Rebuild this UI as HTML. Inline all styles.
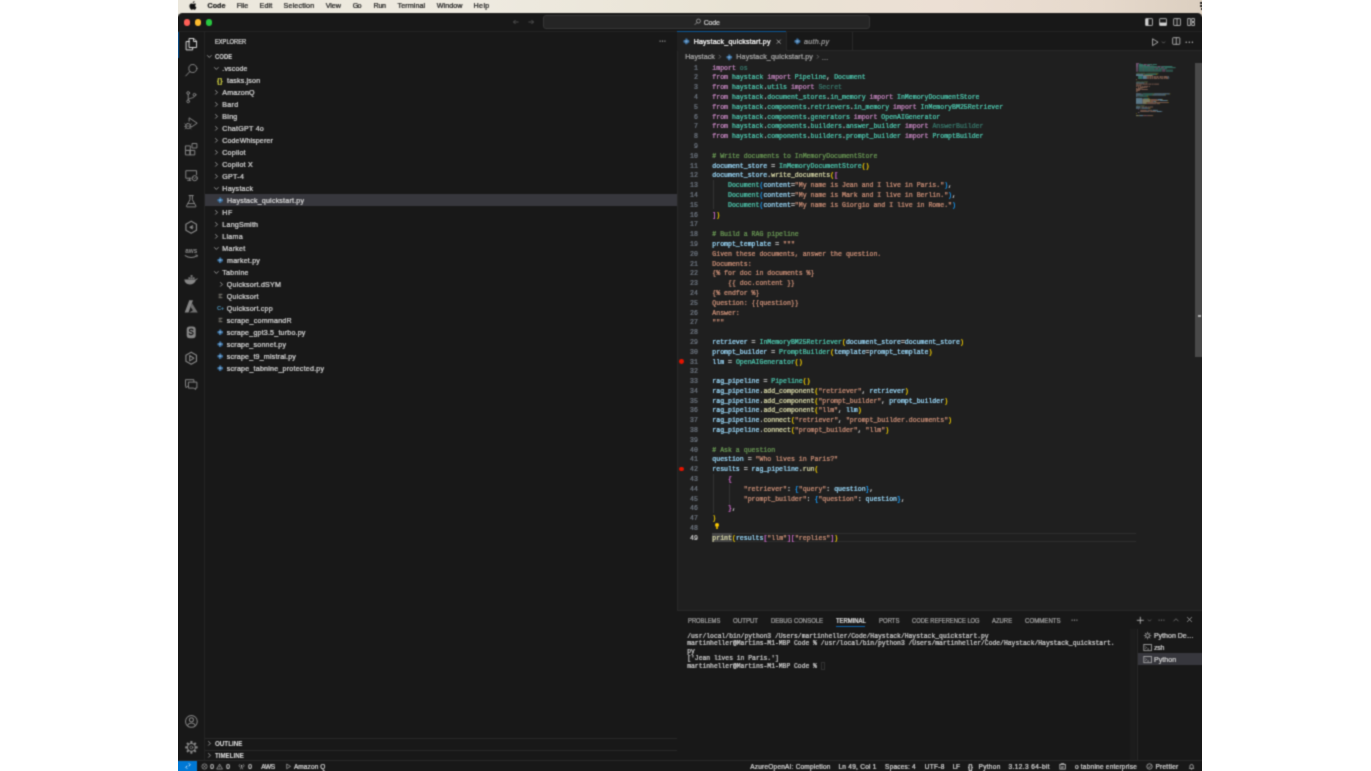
<!DOCTYPE html>
<html lang="en"><head><meta charset="utf-8"><title>Haystack_quickstart.py — Code</title>
<style>
html,body{margin:0;padding:0;background:#fff}
body{position:relative;width:1371px;height:771px;overflow:hidden;font-family:"Liberation Sans", sans-serif;-webkit-font-smoothing:antialiased}
#w{position:absolute;left:178px;top:0;width:1024px;height:771px;background:#181818;overflow:hidden;filter:url(#soft)}
#c{position:absolute;left:-178px;top:0;width:1371px;height:771px}
#c>div,#c>svg,#c>span{position:absolute}
svg{overflow:visible;display:block}
.t{white-space:pre;display:block;-webkit-text-stroke:0.240px}
.m{font-family:"Liberation Mono", monospace;font-size:6.556px;height:9.79px;line-height:9.79px;color:#d4d4d4}
.tm{font-family:"Liberation Mono", monospace;font-size:6.37px;height:7.62px;line-height:7.62px;color:#cccccc}
</style></head>
<body>
<svg width="0" height="0" style="position:absolute"><filter id="soft" x="0" y="0" width="100%" height="100%" color-interpolation-filters="sRGB"><feConvolveMatrix order="3" kernelMatrix="0.0361 0.1178 0.0361 0.1178 0.3844 0.1178 0.0361 0.1178 0.0361" edgeMode="duplicate" preserveAlpha="true"/></filter></svg>
<div id="w"><div id="c">
<div style="left:178px;top:31.5px;width:1024px;height:739.5px;background:#181818;"></div>
<div style="left:677px;top:31.5px;width:525px;height:579px;background:#1f1f1f;"></div>
<div style="left:204px;top:31.5px;width:0.6px;height:729px;background:#242424;"></div>
<div style="left:676.7px;top:31.5px;width:0.6px;height:729px;background:#282828;"></div>
<div style="left:178px;top:0px;width:1024px;height:16.6px;background:linear-gradient(90deg,#ebe7dc 0%,#eeeae0 30%,#e9e3d4 55%,#ecdfd4 75%,#e6d9cc 90%,#dccfc0 100%);"></div>
<svg style="left:188.6px;top:1.2px;" width="7.8" height="9" viewBox="0 0 17 20"><path fill="#111" d="M12.1 0c.1 1.1-.3 2.2-1 3-.7.8-1.8 1.4-2.8 1.3-.1-1.1.4-2.2 1-2.9C10 .6 11.200 .1 12.1 0zM15.700 6.800c-.1.1-2 1.200-2 3.600 0 2.800 2.500 3.800 2.500 3.800 0 .1-.4 1.400-1.300 2.800-.800 1.200-1.600 2.400-2.900 2.400-1.300 0-1.700-.8-3.100-.8-1.500 0-1.900.800-3.100.800-1.300.1-2.200-1.300-3-2.400C1.100 14.600-.1 10.500 1.600 7.700c.800-1.400 2.300-2.300 3.900-2.300 1.200 0 2.400.800 3.100.800.700 0 2.100-1 3.600-.900.600 0 2.300.200 3.500 1.500z"/></svg>
<span class="t" style="top:0.24px;height:11.52px;line-height:11.52px;font-size:7.2px;color:#1a1a1a;left:207.5px;font-weight:700;letter-spacing:0.01px;">Code</span>
<span class="t" style="top:0.24px;height:11.52px;line-height:11.52px;font-size:7.2px;color:#1a1a1a;left:236.7px;letter-spacing:-0.03px;">File</span>
<span class="t" style="top:0.24px;height:11.52px;line-height:11.52px;font-size:7.2px;color:#1a1a1a;left:259.6px;letter-spacing:0.07px;">Edit</span>
<span class="t" style="top:0.24px;height:11.52px;line-height:11.52px;font-size:7.2px;color:#1a1a1a;left:283.6px;letter-spacing:0.13px;">Selection</span>
<span class="t" style="top:0.24px;height:11.52px;line-height:11.52px;font-size:7.2px;color:#1a1a1a;left:325.7px;letter-spacing:-0.05px;">View</span>
<span class="t" style="top:0.24px;height:11.52px;line-height:11.52px;font-size:7.2px;color:#1a1a1a;left:352.7px;letter-spacing:-0.69px;">Go</span>
<span class="t" style="top:0.24px;height:11.52px;line-height:11.52px;font-size:7.2px;color:#1a1a1a;left:373.5px;letter-spacing:-0.29px;">Run</span>
<span class="t" style="top:0.24px;height:11.52px;line-height:11.52px;font-size:7.2px;color:#1a1a1a;left:397.6px;letter-spacing:0.05px;">Terminal</span>
<span class="t" style="top:0.24px;height:11.52px;line-height:11.52px;font-size:7.2px;color:#1a1a1a;left:436.8px;letter-spacing:0px;">Window</span>
<span class="t" style="top:0.24px;height:11.52px;line-height:11.52px;font-size:7.2px;color:#1a1a1a;left:473.6px;letter-spacing:0.3px;">Help</span>
<div style="left:1199.5px;top:2px;width:2.5px;height:1.5px;background:#222;"></div>
<div style="left:1199.5px;top:5px;width:2.5px;height:1.5px;background:#222;"></div>
<div style="left:1200.5px;top:8px;width:1.5px;height:1.5px;background:#222;"></div>
<div style="left:178px;top:12.6px;width:1024px;height:18.9px;background:#181818;border-radius:4.5px 4.5px 0 0;"></div>
<div style="left:178px;top:30.9px;width:1024px;height:0.6px;background:#242424;"></div>
<div style="left:183.8px;top:19px;width:6.6px;height:6.6px;background:#fe5f57;border-radius:50%;"></div>
<div style="left:194.6px;top:19px;width:6.6px;height:6.6px;background:#febc2e;border-radius:50%;"></div>
<div style="left:205.7px;top:19px;width:6.6px;height:6.6px;background:#28c840;border-radius:50%;"></div>
<svg style="left:512px;top:18px;" width="8" height="8" viewBox="0 0 16 16"><path d="M13 8H3M7 4L3 8l4 4" fill="none" stroke="#6b6b6b" stroke-width="1.3"/></svg>
<svg style="left:527.3px;top:18px;transform:scaleX(-1);" width="8" height="8" viewBox="0 0 16 16"><path d="M13 8H3M7 4L3 8l4 4" fill="none" stroke="#6b6b6b" stroke-width="1.3"/></svg>
<div style="left:543px;top:15.3px;width:327px;height:13.3px;background:#252525;border:0.600px solid #363636;border-radius:3px;box-sizing:border-box;"></div>
<svg style="left:693.5px;top:18.3px;" width="7.5" height="7.5" viewBox="0 0 16 16"><circle cx="9.5" cy="6.5" r="4.3" fill="none" stroke="#ccc" stroke-width="1.3"/><path d="M6.400 9.600L1.500 14.500" stroke="#ccc" stroke-width="1.400"/></svg>
<span class="t" style="top:17.84px;height:11.33px;line-height:11.33px;font-size:7.08px;color:#cccccc;left:703.7px;letter-spacing:-0.21px;">Code</span>
<svg style="left:1144.6px;top:17.85px;" width="8.1" height="8.1" viewBox="0 0 16 16"><rect x="1.250" y="1.250" width="13.500" height="13.500" rx="1" fill="none" stroke="#d4d4d4" stroke-width="1.5"/><rect x="1.250" y="1.250" width="5.500" height="13.500" fill="#d4d4d4"/></svg>
<svg style="left:1159px;top:17.85px;" width="8.1" height="8.1" viewBox="0 0 16 16"><rect x="1.250" y="1.250" width="13.500" height="13.500" rx="1" fill="none" stroke="#d4d4d4" stroke-width="1.5"/><rect x="1.250" y="9" width="13.500" height="5.750" fill="#d4d4d4"/></svg>
<svg style="left:1172.9px;top:17.85px;" width="8.1" height="8.1" viewBox="0 0 16 16"><rect x="1.250" y="1.250" width="13.500" height="13.500" rx="1" fill="none" stroke="#d4d4d4" stroke-width="1.5"/><path d="M8 1.250v13.500" stroke="#d4d4d4" stroke-width="1.5"/></svg>
<svg style="left:1187.4px;top:17.85px;" width="8.1" height="8.1" viewBox="0 0 16 16"><rect x="1.500" y="1.250" width="5" height="13.500" fill="none" stroke="#d4d4d4" stroke-width="1.5"/><rect x="9.500" y="1.250" width="5" height="5.500" fill="none" stroke="#d4d4d4" stroke-width="1.5"/><rect x="9.500" y="9.250" width="5" height="5.500" fill="none" stroke="#d4d4d4" stroke-width="1.5"/></svg>
<div style="left:178px;top:31.5px;width:1.3px;height:26.1px;background:#0a5596;"></div>
<svg style="left:183.8px;top:37.3px;" width="14.4" height="14.4" viewBox="0 0 24 24"><path d="M9 2.500h7.500l4.500 4.500v10.500h-12z" fill="none" stroke="#d7d7d7" stroke-width="1.65" stroke-linejoin="round" stroke-linecap="round"/><path d="M16 2.500v5h5" fill="none" stroke="#d7d7d7" stroke-width="1.65" stroke-linejoin="round" stroke-linecap="round"/><path d="M9 7.500H3.500v14h11v-4" fill="none" stroke="#d7d7d7" stroke-width="1.65" stroke-linejoin="round" stroke-linecap="round"/></svg>
<svg style="left:183.8px;top:63.44px;" width="14.4" height="14.4" viewBox="0 0 24 24"><circle cx="14.800" cy="9.200" r="6.700" fill="none" stroke="#868686" stroke-width="1.65" stroke-linejoin="round" stroke-linecap="round"/><path d="M10 14L3 21.500" fill="none" stroke="#868686" stroke-width="1.65" stroke-linejoin="round" stroke-linecap="round"/></svg>
<svg style="left:183.8px;top:89.58px;" width="14.4" height="14.4" viewBox="0 0 24 24"><circle cx="7" cy="5" r="2.300" fill="none" stroke="#868686" stroke-width="1.65" stroke-linejoin="round" stroke-linecap="round"/><circle cx="7" cy="19" r="2.300" fill="none" stroke="#868686" stroke-width="1.65" stroke-linejoin="round" stroke-linecap="round"/><circle cx="17.500" cy="8" r="2.300" fill="none" stroke="#868686" stroke-width="1.65" stroke-linejoin="round" stroke-linecap="round"/><path d="M7 7.300v9.400M17.500 10.300c0 4.500-10.500 2-10.500 6.400" fill="none" stroke="#868686" stroke-width="1.65" stroke-linejoin="round" stroke-linecap="round"/></svg>
<svg style="left:183.8px;top:115.72px;" width="14.4" height="14.4" viewBox="0 0 24 24"><path d="M8.500 8.500V3L22 12l-9.500 6.300" fill="none" stroke="#868686" stroke-width="1.65" stroke-linejoin="round" stroke-linecap="round"/><rect x="3" y="12.500" width="7.500" height="8.500" rx="3.200" fill="none" stroke="#868686" stroke-width="1.65" stroke-linejoin="round" stroke-linecap="round"/><path d="M3 16.800h7.500M3 14.500L1.300 13M10.500 14.500l1.700-1.500M1 17.500h2M10.500 17.500h2M3.300 20l-1.500 1.300M10.200 20l1.500 1.300" fill="none" stroke="#868686" stroke-width="1.2" stroke-linejoin="round" stroke-linecap="round"/></svg>
<svg style="left:183.8px;top:141.86px;" width="14.4" height="14.4" viewBox="0 0 24 24"><rect x="3" y="6.500" width="7.500" height="7.500" fill="none" stroke="#868686" stroke-width="1.65" stroke-linejoin="round" stroke-linecap="round"/><rect x="3" y="14" width="7.500" height="7.500" fill="none" stroke="#868686" stroke-width="1.65" stroke-linejoin="round" stroke-linecap="round"/><rect x="10.500" y="14" width="7.500" height="7.500" fill="none" stroke="#868686" stroke-width="1.65" stroke-linejoin="round" stroke-linecap="round"/><rect x="14" y="2.500" width="7.500" height="7.500" fill="none" stroke="#868686" stroke-width="1.65" stroke-linejoin="round" stroke-linecap="round"/></svg>
<svg style="left:183.8px;top:168px;" width="14.4" height="14.4" viewBox="0 0 24 24"><path d="M12 17H3V4.500h18V11" fill="none" stroke="#868686" stroke-width="1.65" stroke-linejoin="round" stroke-linecap="round"/><path d="M6 20.500h5.500M9.500 17v3.500" fill="none" stroke="#868686" stroke-width="1.65" stroke-linejoin="round" stroke-linecap="round"/><circle cx="18" cy="17" r="4.300" fill="none" stroke="#868686" stroke-width="1.65" stroke-linejoin="round" stroke-linecap="round"/><path d="M16.200 16.200l1.600 1.600 2.200-2.400" fill="none" stroke="#868686" stroke-width="1.2" stroke-linejoin="round" stroke-linecap="round"/></svg>
<svg style="left:183.8px;top:194.14px;" width="14.4" height="14.4" viewBox="0 0 24 24"><path d="M8.500 2.500h7M10 2.500v7L4 20.200c-.300.700.100 1.300.800 1.300h14.400c.700 0 1.100-.600.800-1.300L14 9.500v-7" fill="none" stroke="#868686" stroke-width="1.65" stroke-linejoin="round" stroke-linecap="round"/><path d="M6.500 16h11" fill="none" stroke="#868686" stroke-width="1.65" stroke-linejoin="round" stroke-linecap="round"/></svg>
<svg style="left:183.8px;top:220.28px;" width="14.4" height="14.4" viewBox="0 0 24 24"><path d="M12 2l8.800 5v10L12 22l-8.800-5V7z" fill="none" stroke="#868686" stroke-width="2.1" stroke-linejoin="round" stroke-linecap="round"/><path d="M14.500 9.500L10 12.200l4 2.300M10 12.200h5" fill="none" stroke="#868686" stroke-width="1.8" stroke-linejoin="round" stroke-linecap="round"/></svg>
<svg style="left:183.8px;top:246.42px;" width="14.4" height="14.4" viewBox="0 0 24 24"><text x="12" y="12.500" text-anchor="middle" font-family="Liberation Sans, sans-serif" font-weight="700" font-size="11.500" textLength="20" lengthAdjust="spacingAndGlyphs" fill="#868686">aws</text><path d="M2 16c5.500 4 14.500 4 20 0" fill="none" stroke="#868686" stroke-width="1.7" stroke-linejoin="round" stroke-linecap="round"/><path d="M19.500 15l2.800.400-.700 2.600" fill="none" stroke="#868686" stroke-width="1.2" stroke-linejoin="round" stroke-linecap="round"/></svg>
<svg style="left:183.8px;top:272.56px;" width="14.4" height="14.4" viewBox="0 0 24 24"><path fill="#868686" d="M.500 11h17.500c.900-.100 1.600-.700 1.900-1.600.900.200 2.300.100 3.300-.600-.300 1.500-1.500 2.500-3.300 2.700-1.300 5-5 7.500-10.400 7.500-5.600 0-8.500-3-9-8z"/><path fill="#868686" d="M11 3.500h3.200v3.200H11zM11 7.200h3.200v3.200H11zM7.300 7.200h3.200v3.200H7.300zM14.700 7.200h3v3.200h-3z" opacity=".85"/></svg>
<svg style="left:183.8px;top:298.7px;" width="14.4" height="14.4" viewBox="0 0 24 24"><path fill="#868686" d="M8.800 2h6.200L7.500 22.500H1.200z"/><path fill="#868686" opacity=".8" d="M13.200 6.500l9.800 16H8.500l6.500-3.800-4-4.800z"/></svg>
<svg style="left:183.8px;top:324.84px;" width="14.4" height="14.4" viewBox="0 0 24 24"><rect x="4.500" y="2.500" width="15" height="19.500" rx="5" fill="#868686"/><path d="M15 8.200c-.800-1.800-6-1.900-6 .900 0 2.900 6.200 1.500 6.200 4.800 0 2.800-5.500 2.800-6.500.600" fill="none" stroke="#181818" stroke-width="2" stroke-linecap="round"/></svg>
<svg style="left:183.8px;top:350.98px;" width="14.4" height="14.4" viewBox="0 0 24 24"><path d="M12 2l8.800 5v10L12 22l-8.800-5V7z" fill="none" stroke="#868686" stroke-width="2" stroke-linejoin="round" stroke-linecap="round"/><path d="M9.500 7.500v9l7-4.500z" fill="none" stroke="#868686" stroke-width="1.8" stroke-linejoin="round" stroke-linecap="round"/></svg>
<svg style="left:183.8px;top:377.12px;" width="14.4" height="14.4" viewBox="0 0 24 24"><path d="M7.500 15.500H6l-2.500 2.500v-2.500H2.500v-11h14V8" fill="none" stroke="#868686" stroke-width="1.65" stroke-linejoin="round" stroke-linecap="round"/><path d="M8 8.500h13.500v10H19V21l-2.500-2.500H8z" fill="none" stroke="#868686" stroke-width="1.65" stroke-linejoin="round" stroke-linecap="round"/></svg>
<svg style="left:183.8px;top:714.1px;" width="14.8" height="14.8" viewBox="0 0 24 24"><circle cx="12" cy="12" r="9.500" fill="none" stroke="#868686" stroke-width="1.65" stroke-linejoin="round" stroke-linecap="round"/><circle cx="12" cy="9.500" r="3.300" fill="none" stroke="#868686" stroke-width="1.65" stroke-linejoin="round" stroke-linecap="round"/><path d="M5.500 18.700c1.500-3 4-4 6.500-4s5 1 6.500 4" fill="none" stroke="#868686" stroke-width="1.65" stroke-linejoin="round" stroke-linecap="round"/></svg>
<svg style="left:183.8px;top:740.3px;" width="14.8" height="14.8" viewBox="0 0 24 24"><rect x="10.300" y="1.800" width="3.400" height="4.500" rx="0.800" fill="#868686" transform="rotate(0 12 12)"/><rect x="10.300" y="1.800" width="3.400" height="4.500" rx="0.800" fill="#868686" transform="rotate(45 12 12)"/><rect x="10.300" y="1.800" width="3.400" height="4.500" rx="0.800" fill="#868686" transform="rotate(90 12 12)"/><rect x="10.300" y="1.800" width="3.400" height="4.500" rx="0.800" fill="#868686" transform="rotate(135 12 12)"/><rect x="10.300" y="1.800" width="3.400" height="4.500" rx="0.800" fill="#868686" transform="rotate(180 12 12)"/><rect x="10.300" y="1.800" width="3.400" height="4.500" rx="0.800" fill="#868686" transform="rotate(225 12 12)"/><rect x="10.300" y="1.800" width="3.400" height="4.500" rx="0.800" fill="#868686" transform="rotate(270 12 12)"/><rect x="10.300" y="1.800" width="3.400" height="4.500" rx="0.800" fill="#868686" transform="rotate(315 12 12)"/><circle cx="12" cy="12" r="6.300" fill="none" stroke="#868686" stroke-width="1.8" stroke-linejoin="round" stroke-linecap="round"/><circle cx="12" cy="12" r="2.300" fill="none" stroke="#868686" stroke-width="1.3" stroke-linejoin="round" stroke-linecap="round"/></svg>
<span class="t" style="top:36.88px;height:10.24px;line-height:10.24px;font-size:6.4px;color:#d8d8d8;left:214.9px;transform:scaleX(0.8934);transform-origin:0 50%;">EXPLORER</span>
<svg style="left:658.78px;top:40.08px;" width="7.04" height="2.24" viewBox="0 0 7.04 2.24"><circle cx="1.12" cy="1.12" r="0.62" fill="#cccccc"/><circle cx="3.52" cy="1.12" r="0.62" fill="#cccccc"/><circle cx="5.92" cy="1.12" r="0.62" fill="#cccccc"/></svg>
<svg style="left:204.95px;top:52.15px;" width="8.7" height="8.7" viewBox="0 0 16 16"><path d="M4 6l4 4 4-4" fill="none" stroke="#c5c5c5" stroke-width="1.300"/></svg>
<span class="t" style="top:51.88px;height:10.24px;line-height:10.24px;font-size:6.4px;color:#e2e2e2;left:214.9px;font-weight:700;-webkit-text-stroke:0;transform:scaleX(0.9313);transform-origin:0 50%;">CODE</span>
<svg style="left:212.25px;top:64.13px;" width="8.7" height="8.7" viewBox="0 0 16 16"><path d="M4 6l4 4 4-4" fill="none" stroke="#c5c5c5" stroke-width="1.300"/></svg>
<span class="t" style="top:63.83px;height:11.33px;line-height:11.33px;font-size:7.08px;color:#d6d6d6;left:222.3px;letter-spacing:0.13px;">.vscode</span>
<span class="t" style="top:75.72px;height:10.56px;line-height:10.56px;font-size:6.6px;color:#cbcb41;left:216.9px;font-weight:700;letter-spacing:0.6px;">{}</span>
<span class="t" style="top:75.83px;height:11.33px;line-height:11.33px;font-size:7.08px;color:#d6d6d6;left:227px;letter-spacing:0.18px;">tasks.json</span>
<svg style="left:212.25px;top:88.09px;" width="8.7" height="8.7" viewBox="0 0 16 16"><path d="M6 4l4 4-4 4" fill="none" stroke="#c5c5c5" stroke-width="1.300"/></svg>
<span class="t" style="top:87.83px;height:11.33px;line-height:11.33px;font-size:7.08px;color:#d6d6d6;left:222.3px;letter-spacing:0.12px;">AmazonQ</span>
<svg style="left:212.25px;top:100.07px;" width="8.7" height="8.7" viewBox="0 0 16 16"><path d="M6 4l4 4-4 4" fill="none" stroke="#c5c5c5" stroke-width="1.300"/></svg>
<span class="t" style="top:99.83px;height:11.33px;line-height:11.33px;font-size:7.08px;color:#d6d6d6;left:222.3px;letter-spacing:0.29px;">Bard</span>
<svg style="left:212.25px;top:112.05px;" width="8.7" height="8.7" viewBox="0 0 16 16"><path d="M6 4l4 4-4 4" fill="none" stroke="#c5c5c5" stroke-width="1.300"/></svg>
<span class="t" style="top:111.83px;height:11.33px;line-height:11.33px;font-size:7.08px;color:#d6d6d6;left:222.3px;letter-spacing:0.27px;">Bing</span>
<svg style="left:212.25px;top:124.03px;" width="8.7" height="8.7" viewBox="0 0 16 16"><path d="M6 4l4 4-4 4" fill="none" stroke="#c5c5c5" stroke-width="1.300"/></svg>
<span class="t" style="top:123.84px;height:11.33px;line-height:11.33px;font-size:7.08px;color:#d6d6d6;left:222.3px;letter-spacing:0.25px;">ChatGPT 4o</span>
<svg style="left:212.25px;top:136.01px;" width="8.7" height="8.7" viewBox="0 0 16 16"><path d="M6 4l4 4-4 4" fill="none" stroke="#c5c5c5" stroke-width="1.300"/></svg>
<span class="t" style="top:135.84px;height:11.33px;line-height:11.33px;font-size:7.08px;color:#d6d6d6;left:222.3px;letter-spacing:0.11px;">CodeWhisperer</span>
<svg style="left:212.25px;top:147.99px;" width="8.7" height="8.7" viewBox="0 0 16 16"><path d="M6 4l4 4-4 4" fill="none" stroke="#c5c5c5" stroke-width="1.300"/></svg>
<span class="t" style="top:147.84px;height:11.33px;line-height:11.33px;font-size:7.08px;color:#d6d6d6;left:222.3px;letter-spacing:0.21px;">Copilot</span>
<svg style="left:212.25px;top:159.97px;" width="8.7" height="8.7" viewBox="0 0 16 16"><path d="M6 4l4 4-4 4" fill="none" stroke="#c5c5c5" stroke-width="1.300"/></svg>
<span class="t" style="top:159.84px;height:11.33px;line-height:11.33px;font-size:7.08px;color:#d6d6d6;left:222.3px;letter-spacing:0.21px;">Copilot X</span>
<svg style="left:212.25px;top:171.95px;" width="8.7" height="8.7" viewBox="0 0 16 16"><path d="M6 4l4 4-4 4" fill="none" stroke="#c5c5c5" stroke-width="1.300"/></svg>
<span class="t" style="top:171.84px;height:11.33px;line-height:11.33px;font-size:7.08px;color:#d6d6d6;left:222.3px;letter-spacing:0.3px;">GPT-4</span>
<svg style="left:212.25px;top:183.93px;" width="8.7" height="8.7" viewBox="0 0 16 16"><path d="M4 6l4 4 4-4" fill="none" stroke="#c5c5c5" stroke-width="1.300"/></svg>
<span class="t" style="top:183.84px;height:11.33px;line-height:11.33px;font-size:7.08px;color:#d6d6d6;left:222.3px;letter-spacing:0.24px;">Haystack</span>
<div style="left:204.6px;top:194.27px;width:472.1px;height:11.98px;background:#37373d;"></div>
<svg style="left:217.1px;top:197.06px;" width="6.4" height="6.4" viewBox="0 0 16 16"><path fill="#3d74a6" d="M8 1C5.500 1 5 2 5 3.500V5H2.500C1.500 5 1 6 1 8s.500 3 1.500 3H5v1.500C5 14 5.500 15 8 15s3-1 3-2.500V11h2.500c1 0 1.500-1 1.500-3s-.500-3-1.500-3H11V3.500C11 2 10.500 1 8 1z"/><path fill="#b9d6ee" d="M5.500 5.500h5v5h-5z" opacity=".55"/><circle cx="6.600" cy="3.200" r=".800" fill="#181818"/><circle cx="9.400" cy="12.800" r=".800" fill="#181818"/></svg>
<span class="t" style="top:195.84px;height:11.33px;line-height:11.33px;font-size:7.08px;color:#d6d6d6;left:227px;letter-spacing:0.2px;">Haystack_quickstart.py</span>
<svg style="left:212.25px;top:207.89px;" width="8.7" height="8.7" viewBox="0 0 16 16"><path d="M6 4l4 4-4 4" fill="none" stroke="#c5c5c5" stroke-width="1.300"/></svg>
<span class="t" style="top:207.84px;height:11.33px;line-height:11.33px;font-size:7.08px;color:#d6d6d6;left:222.3px;letter-spacing:0.55px;">HF</span>
<svg style="left:212.25px;top:219.87px;" width="8.7" height="8.7" viewBox="0 0 16 16"><path d="M6 4l4 4-4 4" fill="none" stroke="#c5c5c5" stroke-width="1.300"/></svg>
<span class="t" style="top:219.84px;height:11.33px;line-height:11.33px;font-size:7.08px;color:#d6d6d6;left:222.3px;letter-spacing:0.24px;">LangSmith</span>
<svg style="left:212.25px;top:231.85px;" width="8.7" height="8.7" viewBox="0 0 16 16"><path d="M6 4l4 4-4 4" fill="none" stroke="#c5c5c5" stroke-width="1.300"/></svg>
<span class="t" style="top:231.84px;height:11.33px;line-height:11.33px;font-size:7.08px;color:#d6d6d6;left:222.3px;letter-spacing:0.28px;">Llama</span>
<svg style="left:212.25px;top:243.83px;" width="8.7" height="8.7" viewBox="0 0 16 16"><path d="M4 6l4 4 4-4" fill="none" stroke="#c5c5c5" stroke-width="1.300"/></svg>
<span class="t" style="top:243.84px;height:11.33px;line-height:11.33px;font-size:7.08px;color:#d6d6d6;left:222.3px;letter-spacing:0.25px;">Market</span>
<svg style="left:217.1px;top:256.96px;" width="6.4" height="6.4" viewBox="0 0 16 16"><path fill="#3d74a6" d="M8 1C5.500 1 5 2 5 3.500V5H2.500C1.500 5 1 6 1 8s.500 3 1.500 3H5v1.500C5 14 5.500 15 8 15s3-1 3-2.500V11h2.500c1 0 1.500-1 1.500-3s-.500-3-1.500-3H11V3.500C11 2 10.500 1 8 1z"/><path fill="#b9d6ee" d="M5.500 5.500h5v5h-5z" opacity=".55"/><circle cx="6.600" cy="3.200" r=".800" fill="#181818"/><circle cx="9.400" cy="12.800" r=".800" fill="#181818"/></svg>
<span class="t" style="top:255.83px;height:11.33px;line-height:11.33px;font-size:7.08px;color:#d6d6d6;left:227px;letter-spacing:0.23px;">market.py</span>
<svg style="left:212.25px;top:267.79px;" width="8.7" height="8.7" viewBox="0 0 16 16"><path d="M4 6l4 4 4-4" fill="none" stroke="#c5c5c5" stroke-width="1.300"/></svg>
<span class="t" style="top:267.83px;height:11.33px;line-height:11.33px;font-size:7.08px;color:#d6d6d6;left:222.3px;letter-spacing:0.24px;">Tabnine</span>
<svg style="left:216.65px;top:279.77px;" width="8.7" height="8.7" viewBox="0 0 16 16"><path d="M6 4l4 4-4 4" fill="none" stroke="#c5c5c5" stroke-width="1.300"/></svg>
<span class="t" style="top:279.83px;height:11.33px;line-height:11.33px;font-size:7.08px;color:#d6d6d6;left:226.8px;letter-spacing:0.23px;">Quicksort.dSYM</span>
<svg style="left:218px;top:293.1px;" width="5" height="6" viewBox="0 0 12 16"><path d="M1 3.500h10M1 8h7M1 12.500h10" stroke="#8f8d84" stroke-width="2.300"/></svg>
<span class="t" style="top:291.83px;height:11.33px;line-height:11.33px;font-size:7.08px;color:#d6d6d6;left:226.8px;letter-spacing:0.22px;">Quicksort</span>
<span class="t" style="top:303.86px;height:9.28px;line-height:9.28px;font-size:5.8px;color:#4b8fb4;left:217px;font-weight:700;-webkit-text-stroke:0;letter-spacing:-0.4px;">C+</span>
<span class="t" style="top:303.83px;height:11.33px;line-height:11.33px;font-size:7.08px;color:#d6d6d6;left:226.8px;letter-spacing:0.21px;">Quicksort.cpp</span>
<svg style="left:218px;top:317.06px;" width="5" height="6" viewBox="0 0 12 16"><path d="M1 3.500h10M1 8h7M1 12.500h10" stroke="#8f8d84" stroke-width="2.300"/></svg>
<span class="t" style="top:315.83px;height:11.33px;line-height:11.33px;font-size:7.08px;color:#d6d6d6;left:226.8px;letter-spacing:0.25px;">scrape_commandR</span>
<svg style="left:217.1px;top:328.84px;" width="6.4" height="6.4" viewBox="0 0 16 16"><path fill="#3d74a6" d="M8 1C5.500 1 5 2 5 3.500V5H2.500C1.500 5 1 6 1 8s.500 3 1.500 3H5v1.500C5 14 5.500 15 8 15s3-1 3-2.500V11h2.500c1 0 1.500-1 1.500-3s-.500-3-1.500-3H11V3.500C11 2 10.500 1 8 1z"/><path fill="#b9d6ee" d="M5.500 5.500h5v5h-5z" opacity=".55"/><circle cx="6.600" cy="3.200" r=".800" fill="#181818"/><circle cx="9.400" cy="12.800" r=".800" fill="#181818"/></svg>
<span class="t" style="top:327.83px;height:11.33px;line-height:11.33px;font-size:7.08px;color:#d6d6d6;left:226.8px;letter-spacing:0.2px;">scrape_gpt3.5_turbo.py</span>
<svg style="left:217.1px;top:340.82px;" width="6.4" height="6.4" viewBox="0 0 16 16"><path fill="#3d74a6" d="M8 1C5.500 1 5 2 5 3.500V5H2.500C1.500 5 1 6 1 8s.500 3 1.500 3H5v1.500C5 14 5.500 15 8 15s3-1 3-2.500V11h2.500c1 0 1.500-1 1.500-3s-.500-3-1.500-3H11V3.500C11 2 10.500 1 8 1z"/><path fill="#b9d6ee" d="M5.500 5.500h5v5h-5z" opacity=".55"/><circle cx="6.600" cy="3.200" r=".800" fill="#181818"/><circle cx="9.400" cy="12.800" r=".800" fill="#181818"/></svg>
<span class="t" style="top:339.83px;height:11.33px;line-height:11.33px;font-size:7.08px;color:#d6d6d6;left:226.8px;letter-spacing:0.22px;">scrape_sonnet.py</span>
<svg style="left:217.1px;top:352.8px;" width="6.4" height="6.4" viewBox="0 0 16 16"><path fill="#3d74a6" d="M8 1C5.500 1 5 2 5 3.500V5H2.500C1.500 5 1 6 1 8s.500 3 1.500 3H5v1.500C5 14 5.500 15 8 15s3-1 3-2.500V11h2.500c1 0 1.500-1 1.500-3s-.500-3-1.500-3H11V3.500C11 2 10.500 1 8 1z"/><path fill="#b9d6ee" d="M5.500 5.500h5v5h-5z" opacity=".55"/><circle cx="6.600" cy="3.200" r=".800" fill="#181818"/><circle cx="9.400" cy="12.800" r=".800" fill="#181818"/></svg>
<span class="t" style="top:351.83px;height:11.33px;line-height:11.33px;font-size:7.08px;color:#d6d6d6;left:226.8px;letter-spacing:0.2px;">scrape_t9_mistral.py</span>
<svg style="left:217.1px;top:364.78px;" width="6.4" height="6.4" viewBox="0 0 16 16"><path fill="#3d74a6" d="M8 1C5.500 1 5 2 5 3.500V5H2.500C1.500 5 1 6 1 8s.500 3 1.500 3H5v1.500C5 14 5.500 15 8 15s3-1 3-2.500V11h2.500c1 0 1.500-1 1.500-3s-.500-3-1.500-3H11V3.500C11 2 10.500 1 8 1z"/><path fill="#b9d6ee" d="M5.500 5.500h5v5h-5z" opacity=".55"/><circle cx="6.600" cy="3.200" r=".800" fill="#181818"/><circle cx="9.400" cy="12.800" r=".800" fill="#181818"/></svg>
<span class="t" style="top:363.83px;height:11.33px;line-height:11.33px;font-size:7.08px;color:#d6d6d6;left:226.8px;letter-spacing:0.23px;">scrape_tabnine_protected.py</span>
<div style="left:204.6px;top:738.2px;width:472.1px;height:0.6px;background:#282828;"></div>
<svg style="left:205.45px;top:739.45px;" width="8.7" height="8.7" viewBox="0 0 16 16"><path d="M6 4l4 4-4 4" fill="none" stroke="#c5c5c5" stroke-width="1.300"/></svg>
<span class="t" style="top:738.88px;height:10.24px;line-height:10.24px;font-size:6.4px;color:#e2e2e2;left:215.1px;font-weight:700;-webkit-text-stroke:0;transform:scaleX(0.9769);transform-origin:0 50%;">OUTLINE</span>
<div style="left:204.6px;top:749.6px;width:472.1px;height:0.6px;background:#282828;"></div>
<svg style="left:205.45px;top:750.85px;" width="8.7" height="8.7" viewBox="0 0 16 16"><path d="M6 4l4 4-4 4" fill="none" stroke="#c5c5c5" stroke-width="1.300"/></svg>
<span class="t" style="top:750.88px;height:10.24px;line-height:10.24px;font-size:6.4px;color:#e2e2e2;left:215.1px;font-weight:700;-webkit-text-stroke:0;transform:scaleX(0.9655);transform-origin:0 50%;">TIMELINE</span>
<div style="left:677px;top:31.5px;width:525px;height:19px;background:#181818;"></div>
<div style="left:677px;top:49.9px;width:525px;height:0.6px;background:#282828;"></div>
<div style="left:677.3px;top:31.5px;width:108.6px;height:19px;background:#1f1f1f;"></div>
<div style="left:677.3px;top:31.1px;width:108.6px;height:0.8px;background:#0c5796;"></div>
<div style="left:785.6px;top:31.5px;width:0.6px;height:19px;background:#282828;"></div>
<svg style="left:683.2px;top:37.8px;" width="6.8" height="6.8" viewBox="0 0 16 16"><path fill="#3d74a6" d="M8 1C5.500 1 5 2 5 3.500V5H2.500C1.500 5 1 6 1 8s.500 3 1.500 3H5v1.500C5 14 5.500 15 8 15s3-1 3-2.500V11h2.500c1 0 1.500-1 1.500-3s-.500-3-1.500-3H11V3.500C11 2 10.500 1 8 1z"/><path fill="#b9d6ee" d="M5.500 5.500h5v5h-5z" opacity=".55"/><circle cx="6.600" cy="3.200" r=".800" fill="#181818"/><circle cx="9.400" cy="12.800" r=".800" fill="#181818"/></svg>
<span class="t" style="top:36.84px;height:11.33px;line-height:11.33px;font-size:7.08px;color:#ffffff;left:693.7px;letter-spacing:0.19px;">Haystack_quickstart.py</span>
<svg style="left:775.9px;top:38.6px;" width="5.4" height="5.4" viewBox="0 0 16 16"><path d="M2 2l12 12M14 2L2 14" stroke="#e8e8e8" stroke-width="1.800"/></svg>
<div style="left:851.6px;top:31.5px;width:0.6px;height:18.4px;background:#282828;"></div>
<svg style="left:793.5px;top:37.8px;" width="6.8" height="6.8" viewBox="0 0 16 16"><path fill="#3d74a6" d="M8 1C5.500 1 5 2 5 3.500V5H2.500C1.500 5 1 6 1 8s.500 3 1.500 3H5v1.500C5 14 5.500 15 8 15s3-1 3-2.500V11h2.500c1 0 1.500-1 1.500-3s-.500-3-1.500-3H11V3.500C11 2 10.500 1 8 1z"/><path fill="#b9d6ee" d="M5.500 5.500h5v5h-5z" opacity=".55"/><circle cx="6.600" cy="3.200" r=".800" fill="#181818"/><circle cx="9.400" cy="12.800" r=".800" fill="#181818"/></svg>
<span class="t" style="top:36.84px;height:11.33px;line-height:11.33px;font-size:7.08px;color:#9d9d9d;left:804px;letter-spacing:0.3px;font-style:italic;">auth.py</span>
<svg style="left:1150.6px;top:37.6px;" width="8.4" height="8.4" viewBox="0 0 16 16"><path d="M3 1.500l10.500 6.500L3 14.500z" fill="none" stroke="#c5c5c5" stroke-width="1.500" stroke-linejoin="round"/></svg>
<svg style="left:1161.3px;top:39.6px;" width="5" height="5" viewBox="0 0 16 16"><path d="M3 5l5 5 5-5" fill="none" stroke="#8a8a8a" stroke-width="2"/></svg>
<svg style="left:1171.7px;top:37.1px;" width="8.5" height="8" viewBox="0 0 16 15"><rect x="1.250" y="1.250" width="13.500" height="12.500" rx="1" fill="none" stroke="#c5c5c5" stroke-width="1.500"/><path d="M8 1.250v12.500" stroke="#c5c5c5" stroke-width="1.500"/></svg>
<svg style="left:1184.9px;top:40.6px;" width="8.6" height="2.4" viewBox="0 0 8.6 2.4"><circle cx="1.2" cy="1.2" r="0.7" fill="#c5c5c5"/><circle cx="4.3" cy="1.2" r="0.7" fill="#c5c5c5"/><circle cx="7.4" cy="1.2" r="0.7" fill="#c5c5c5"/></svg>
<span class="t" style="top:51.84px;height:11.33px;line-height:11.33px;font-size:7.08px;color:#a9a9a9;left:685.2px;letter-spacing:0.07px;">Haystack</span>
<svg style="left:716.05px;top:53.15px;" width="7.5" height="7.5" viewBox="0 0 16 16"><path d="M6 4l4 4-4 4" fill="none" stroke="#8a8a8a" stroke-width="1.300"/></svg>
<svg style="left:725.5px;top:53.6px;" width="6.6" height="6.6" viewBox="0 0 16 16"><path fill="#3d74a6" d="M8 1C5.500 1 5 2 5 3.500V5H2.500C1.500 5 1 6 1 8s.500 3 1.500 3H5v1.500C5 14 5.500 15 8 15s3-1 3-2.500V11h2.500c1 0 1.500-1 1.500-3s-.500-3-1.500-3H11V3.500C11 2 10.500 1 8 1z"/><path fill="#b9d6ee" d="M5.500 5.500h5v5h-5z" opacity=".55"/><circle cx="6.600" cy="3.200" r=".800" fill="#181818"/><circle cx="9.400" cy="12.800" r=".800" fill="#181818"/></svg>
<span class="t" style="top:51.84px;height:11.33px;line-height:11.33px;font-size:7.08px;color:#a9a9a9;left:736.3px;letter-spacing:0.18px;">Haystack_quickstart.py</span>
<svg style="left:813.55px;top:53.15px;" width="7.5" height="7.5" viewBox="0 0 16 16"><path d="M6 4l4 4-4 4" fill="none" stroke="#8a8a8a" stroke-width="1.300"/></svg>
<span class="t" style="top:52.4px;height:11.2px;line-height:11.2px;font-size:7px;color:#8a8a8a;left:821.5px;">…</span>
<div style="left:712px;top:532.66px;width:423.7px;height:9.79px;background:transparent;box-sizing:border-box;border-top:0.7px solid #2e2e2e;border-bottom:0.7px solid #2e2e2e;"></div>
<div style="left:712.3px;top:533.26px;width:19.67px;height:8.6px;background:#454545;"></div>
<div style="left:712.5px;top:180.04px;width:0.6px;height:29.38px;background:#323232;"></div>
<div style="left:712.5px;top:473.89px;width:0.6px;height:39.18px;background:#323232;"></div>
<div style="left:728.64px;top:483.69px;width:0.6px;height:21.55px;background:#323232;"></div>
<div style="left:679.2px;top:358.85px;width:4.8px;height:4.8px;background:#e51400;border-radius:50%;"></div>
<div style="left:679.2px;top:466.59px;width:4.8px;height:4.8px;background:#e51400;border-radius:50%;"></div>
<div style="left:714.6px;top:522.8px;width:4.6px;height:4.6px;background:#ffcc00;border-radius:50%;"></div>
<div style="left:715.8px;top:527.3px;width:2.2px;height:1.5px;background:#c9a100;"></div>
<span class="t m" style="left:680px;width:17.900px;text-align:right;top:64.1px;color:#6e7681">1</span>
<span class="t m" style="left:712.3px;top:64.1px"><span style="color:#c586c0">import</span> <span style="color:#38786c">os</span></span>
<span class="t m" style="left:680px;width:17.900px;text-align:right;top:73.1px;color:#6e7681">2</span>
<span class="t m" style="left:712.3px;top:73.1px"><span style="color:#c586c0">from</span> <span style="color:#4ec9b0">haystack</span> <span style="color:#c586c0">import</span> <span style="color:#4ec9b0">Pipeline</span>, <span style="color:#4ec9b0">Document</span></span>
<span class="t m" style="left:680px;width:17.900px;text-align:right;top:83.1px;color:#6e7681">3</span>
<span class="t m" style="left:712.3px;top:83.1px"><span style="color:#c586c0">from</span> <span style="color:#4ec9b0">haystack</span>.<span style="color:#4ec9b0">utils</span> <span style="color:#c586c0">import</span> <span style="color:#38786c">Secret</span></span>
<span class="t m" style="left:680px;width:17.900px;text-align:right;top:93.1px;color:#6e7681">4</span>
<span class="t m" style="left:712.3px;top:93.1px"><span style="color:#c586c0">from</span> <span style="color:#4ec9b0">haystack</span>.<span style="color:#4ec9b0">document_stores</span>.<span style="color:#4ec9b0">in_memory</span> <span style="color:#c586c0">import</span> <span style="color:#4ec9b0">InMemoryDocumentStore</span></span>
<span class="t m" style="left:680px;width:17.900px;text-align:right;top:103.1px;color:#6e7681">5</span>
<span class="t m" style="left:712.3px;top:103.1px"><span style="color:#c586c0">from</span> <span style="color:#4ec9b0">haystack</span>.<span style="color:#4ec9b0">components</span>.<span style="color:#4ec9b0">retrievers</span>.<span style="color:#4ec9b0">in_memory</span> <span style="color:#c586c0">import</span> <span style="color:#4ec9b0">InMemoryBM25Retriever</span></span>
<span class="t m" style="left:680px;width:17.900px;text-align:right;top:113.1px;color:#6e7681">6</span>
<span class="t m" style="left:712.3px;top:113.1px"><span style="color:#c586c0">from</span> <span style="color:#4ec9b0">haystack</span>.<span style="color:#4ec9b0">components</span>.<span style="color:#4ec9b0">generators</span> <span style="color:#c586c0">import</span> <span style="color:#4ec9b0">OpenAIGenerator</span></span>
<span class="t m" style="left:680px;width:17.900px;text-align:right;top:122.1px;color:#6e7681">7</span>
<span class="t m" style="left:712.3px;top:122.1px"><span style="color:#c586c0">from</span> <span style="color:#4ec9b0">haystack</span>.<span style="color:#4ec9b0">components</span>.<span style="color:#4ec9b0">builders</span>.<span style="color:#4ec9b0">answer_builder</span> <span style="color:#c586c0">import</span> <span style="color:#38786c">AnswerBuilder</span></span>
<span class="t m" style="left:680px;width:17.900px;text-align:right;top:132.1px;color:#6e7681">8</span>
<span class="t m" style="left:712.3px;top:132.1px"><span style="color:#c586c0">from</span> <span style="color:#4ec9b0">haystack</span>.<span style="color:#4ec9b0">components</span>.<span style="color:#4ec9b0">builders</span>.<span style="color:#4ec9b0">prompt_builder</span> <span style="color:#c586c0">import</span> <span style="color:#4ec9b0">PromptBuilder</span></span>
<span class="t m" style="left:680px;width:17.900px;text-align:right;top:142.1px;color:#6e7681">9</span>
<span class="t m" style="left:680px;width:17.900px;text-align:right;top:152.1px;color:#6e7681">10</span>
<span class="t m" style="left:712.3px;top:152.1px"><span style="color:#6a9955"># Write documents to InMemoryDocumentStore</span></span>
<span class="t m" style="left:680px;width:17.900px;text-align:right;top:162.1px;color:#6e7681">11</span>
<span class="t m" style="left:712.3px;top:162.1px"><span style="color:#9cdcfe">document_store</span> = <span style="color:#4ec9b0">InMemoryDocumentStore</span><span style="color:#ffd700">()</span></span>
<span class="t m" style="left:680px;width:17.900px;text-align:right;top:171.1px;color:#6e7681">12</span>
<span class="t m" style="left:712.3px;top:171.1px"><span style="color:#9cdcfe">document_store</span>.<span style="color:#dcdcaa">write_documents</span><span style="color:#ffd700">(</span><span style="color:#da70d6">[</span></span>
<span class="t m" style="left:680px;width:17.900px;text-align:right;top:181.1px;color:#6e7681">13</span>
<span class="t m" style="left:712.3px;top:181.1px">    <span style="color:#4ec9b0">Document</span><span style="color:#179fff">(</span><span style="color:#9cdcfe">content</span>=<span style="color:#ce9178">"My name is Jean and I live in Paris."</span><span style="color:#179fff">)</span>,</span>
<span class="t m" style="left:680px;width:17.900px;text-align:right;top:191.1px;color:#6e7681">14</span>
<span class="t m" style="left:712.3px;top:191.1px">    <span style="color:#4ec9b0">Document</span><span style="color:#179fff">(</span><span style="color:#9cdcfe">content</span>=<span style="color:#ce9178">"My name is Mark and I live in Berlin."</span><span style="color:#179fff">)</span>,</span>
<span class="t m" style="left:680px;width:17.900px;text-align:right;top:201.1px;color:#6e7681">15</span>
<span class="t m" style="left:712.3px;top:201.1px">    <span style="color:#4ec9b0">Document</span><span style="color:#179fff">(</span><span style="color:#9cdcfe">content</span>=<span style="color:#ce9178">"My name is Giorgio and I live in Rome."</span><span style="color:#179fff">)</span></span>
<span class="t m" style="left:680px;width:17.900px;text-align:right;top:211.1px;color:#6e7681">16</span>
<span class="t m" style="left:712.3px;top:211.1px"><span style="color:#da70d6">]</span><span style="color:#ffd700">)</span></span>
<span class="t m" style="left:680px;width:17.900px;text-align:right;top:220.1px;color:#6e7681">17</span>
<span class="t m" style="left:680px;width:17.900px;text-align:right;top:230.1px;color:#6e7681">18</span>
<span class="t m" style="left:712.3px;top:230.1px"><span style="color:#6a9955"># Build a RAG pipeline</span></span>
<span class="t m" style="left:680px;width:17.900px;text-align:right;top:240.1px;color:#6e7681">19</span>
<span class="t m" style="left:712.3px;top:240.1px"><span style="color:#9cdcfe">prompt_template</span> = <span style="color:#ce9178">"""</span></span>
<span class="t m" style="left:680px;width:17.900px;text-align:right;top:250.1px;color:#6e7681">20</span>
<span class="t m" style="left:712.3px;top:250.1px"><span style="color:#ce9178">Given these documents, answer the question.</span></span>
<span class="t m" style="left:680px;width:17.900px;text-align:right;top:260.1px;color:#6e7681">21</span>
<span class="t m" style="left:712.3px;top:260.1px"><span style="color:#ce9178">Documents:</span></span>
<span class="t m" style="left:680px;width:17.900px;text-align:right;top:269.1px;color:#6e7681">22</span>
<span class="t m" style="left:712.3px;top:269.1px"><span style="color:#ce9178">{% for doc in documents %}</span></span>
<span class="t m" style="left:680px;width:17.900px;text-align:right;top:279.1px;color:#6e7681">23</span>
<span class="t m" style="left:712.3px;top:279.1px"><span style="color:#ce9178">    {{ doc.content }}</span></span>
<span class="t m" style="left:680px;width:17.900px;text-align:right;top:289.1px;color:#6e7681">24</span>
<span class="t m" style="left:712.3px;top:289.1px"><span style="color:#ce9178">{% endfor %}</span></span>
<span class="t m" style="left:680px;width:17.900px;text-align:right;top:299.1px;color:#6e7681">25</span>
<span class="t m" style="left:712.3px;top:299.1px"><span style="color:#ce9178">Question: {{question}}</span></span>
<span class="t m" style="left:680px;width:17.900px;text-align:right;top:309.1px;color:#6e7681">26</span>
<span class="t m" style="left:712.3px;top:309.1px"><span style="color:#ce9178">Answer:</span></span>
<span class="t m" style="left:680px;width:17.900px;text-align:right;top:318.1px;color:#6e7681">27</span>
<span class="t m" style="left:712.3px;top:318.1px"><span style="color:#ce9178">"""</span></span>
<span class="t m" style="left:680px;width:17.900px;text-align:right;top:328.1px;color:#6e7681">28</span>
<span class="t m" style="left:680px;width:17.900px;text-align:right;top:338.1px;color:#6e7681">29</span>
<span class="t m" style="left:712.3px;top:338.1px"><span style="color:#9cdcfe">retriever</span> = <span style="color:#4ec9b0">InMemoryBM25Retriever</span><span style="color:#ffd700">(</span><span style="color:#9cdcfe">document_store</span>=<span style="color:#9cdcfe">document_store</span><span style="color:#ffd700">)</span></span>
<span class="t m" style="left:680px;width:17.900px;text-align:right;top:348.1px;color:#6e7681">30</span>
<span class="t m" style="left:712.3px;top:348.1px"><span style="color:#9cdcfe">prompt_builder</span> = <span style="color:#4ec9b0">PromptBuilder</span><span style="color:#ffd700">(</span><span style="color:#9cdcfe">template</span>=<span style="color:#9cdcfe">prompt_template</span><span style="color:#ffd700">)</span></span>
<span class="t m" style="left:680px;width:17.900px;text-align:right;top:358.1px;color:#6e7681">31</span>
<span class="t m" style="left:712.3px;top:358.1px"><span style="color:#9cdcfe">llm</span> = <span style="color:#4ec9b0">OpenAIGenerator</span><span style="color:#ffd700">()</span></span>
<span class="t m" style="left:680px;width:17.900px;text-align:right;top:367.1px;color:#6e7681">32</span>
<span class="t m" style="left:680px;width:17.900px;text-align:right;top:377.1px;color:#6e7681">33</span>
<span class="t m" style="left:712.3px;top:377.1px"><span style="color:#9cdcfe">rag_pipeline</span> = <span style="color:#4ec9b0">Pipeline</span><span style="color:#ffd700">()</span></span>
<span class="t m" style="left:680px;width:17.900px;text-align:right;top:387.1px;color:#6e7681">34</span>
<span class="t m" style="left:712.3px;top:387.1px"><span style="color:#9cdcfe">rag_pipeline</span>.<span style="color:#dcdcaa">add_component</span><span style="color:#ffd700">(</span><span style="color:#ce9178">"retriever"</span>, <span style="color:#9cdcfe">retriever</span><span style="color:#ffd700">)</span></span>
<span class="t m" style="left:680px;width:17.900px;text-align:right;top:397.1px;color:#6e7681">35</span>
<span class="t m" style="left:712.3px;top:397.1px"><span style="color:#9cdcfe">rag_pipeline</span>.<span style="color:#dcdcaa">add_component</span><span style="color:#ffd700">(</span><span style="color:#ce9178">"prompt_builder"</span>, <span style="color:#9cdcfe">prompt_builder</span><span style="color:#ffd700">)</span></span>
<span class="t m" style="left:680px;width:17.900px;text-align:right;top:406.1px;color:#6e7681">36</span>
<span class="t m" style="left:712.3px;top:406.1px"><span style="color:#9cdcfe">rag_pipeline</span>.<span style="color:#dcdcaa">add_component</span><span style="color:#ffd700">(</span><span style="color:#ce9178">"llm"</span>, <span style="color:#9cdcfe">llm</span><span style="color:#ffd700">)</span></span>
<span class="t m" style="left:680px;width:17.900px;text-align:right;top:416.1px;color:#6e7681">37</span>
<span class="t m" style="left:712.3px;top:416.1px"><span style="color:#9cdcfe">rag_pipeline</span>.<span style="color:#dcdcaa">connect</span><span style="color:#ffd700">(</span><span style="color:#ce9178">"retriever"</span>, <span style="color:#ce9178">"prompt_builder.documents"</span><span style="color:#ffd700">)</span></span>
<span class="t m" style="left:680px;width:17.900px;text-align:right;top:426.1px;color:#6e7681">38</span>
<span class="t m" style="left:712.3px;top:426.1px"><span style="color:#9cdcfe">rag_pipeline</span>.<span style="color:#dcdcaa">connect</span><span style="color:#ffd700">(</span><span style="color:#ce9178">"prompt_builder"</span>, <span style="color:#ce9178">"llm"</span><span style="color:#ffd700">)</span></span>
<span class="t m" style="left:680px;width:17.900px;text-align:right;top:436.1px;color:#6e7681">39</span>
<span class="t m" style="left:680px;width:17.900px;text-align:right;top:446.1px;color:#6e7681">40</span>
<span class="t m" style="left:712.3px;top:446.1px"><span style="color:#6a9955"># Ask a question</span></span>
<span class="t m" style="left:680px;width:17.900px;text-align:right;top:455.1px;color:#6e7681">41</span>
<span class="t m" style="left:712.3px;top:455.1px"><span style="color:#9cdcfe">question</span> = <span style="color:#ce9178">"Who lives in Paris?"</span></span>
<span class="t m" style="left:680px;width:17.900px;text-align:right;top:465.1px;color:#6e7681">42</span>
<span class="t m" style="left:712.3px;top:465.1px"><span style="color:#9cdcfe">results</span> = <span style="color:#9cdcfe">rag_pipeline</span>.<span style="color:#dcdcaa">run</span><span style="color:#ffd700">(</span></span>
<span class="t m" style="left:680px;width:17.900px;text-align:right;top:475.1px;color:#6e7681">43</span>
<span class="t m" style="left:712.3px;top:475.1px">    <span style="color:#da70d6">{</span></span>
<span class="t m" style="left:680px;width:17.900px;text-align:right;top:485.1px;color:#6e7681">44</span>
<span class="t m" style="left:712.3px;top:485.1px">        <span style="color:#ce9178">"retriever"</span>: <span style="color:#179fff">{</span><span style="color:#ce9178">"query"</span>: <span style="color:#9cdcfe">question</span><span style="color:#179fff">}</span>,</span>
<span class="t m" style="left:680px;width:17.900px;text-align:right;top:495.1px;color:#6e7681">45</span>
<span class="t m" style="left:712.3px;top:495.1px">        <span style="color:#ce9178">"prompt_builder"</span>: <span style="color:#179fff">{</span><span style="color:#ce9178">"question"</span>: <span style="color:#9cdcfe">question</span><span style="color:#179fff">}</span>,</span>
<span class="t m" style="left:680px;width:17.900px;text-align:right;top:504.1px;color:#6e7681">46</span>
<span class="t m" style="left:712.3px;top:504.1px">    <span style="color:#da70d6">}</span>,</span>
<span class="t m" style="left:680px;width:17.900px;text-align:right;top:514.1px;color:#6e7681">47</span>
<span class="t m" style="left:712.3px;top:514.1px"><span style="color:#ffd700">)</span></span>
<span class="t m" style="left:680px;width:17.900px;text-align:right;top:524.1px;color:#6e7681">48</span>
<span class="t m" style="left:680px;width:17.900px;text-align:right;top:534.1px;color:#cccccc">49</span>
<span class="t m" style="left:712.3px;top:534.1px"><span style="color:#dcdcaa">print</span><span style="color:#ffd700">(</span><span style="color:#9cdcfe">results</span><span style="color:#da70d6">[</span><span style="color:#ce9178">"llm"</span><span style="color:#da70d6">]</span><span style="color:#da70d6">[</span><span style="color:#ce9178">"replies"</span><span style="color:#da70d6">]</span><span style="color:#ffd700">)</span></span>
<svg style="left:1136.3px;top:63.2px;opacity:.62;" width="60" height="56" viewBox="0 0 60 56"><rect x="0" y="0" width="3.21" height="0.78" fill="#c586c0"/><rect x="3.75" y="0" width="1.07" height="0.78" fill="#38786c"/><rect x="0" y="1.09" width="2.14" height="0.78" fill="#c586c0"/><rect x="2.68" y="1.09" width="4.28" height="0.78" fill="#4ec9b0"/><rect x="7.49" y="1.09" width="3.21" height="0.78" fill="#c586c0"/><rect x="11.24" y="1.09" width="4.28" height="0.78" fill="#4ec9b0"/><rect x="15.52" y="1.09" width="0.54" height="0.78" fill="#d4d4d4"/><rect x="16.59" y="1.09" width="4.28" height="0.78" fill="#4ec9b0"/><rect x="0" y="2.18" width="2.14" height="0.78" fill="#c586c0"/><rect x="2.68" y="2.18" width="4.28" height="0.78" fill="#4ec9b0"/><rect x="6.96" y="2.18" width="0.54" height="0.78" fill="#d4d4d4"/><rect x="7.49" y="2.18" width="2.68" height="0.78" fill="#4ec9b0"/><rect x="10.7" y="2.18" width="3.21" height="0.78" fill="#c586c0"/><rect x="14.45" y="2.18" width="3.21" height="0.78" fill="#38786c"/><rect x="0" y="3.27" width="2.14" height="0.78" fill="#c586c0"/><rect x="2.68" y="3.27" width="4.28" height="0.78" fill="#4ec9b0"/><rect x="6.96" y="3.27" width="0.54" height="0.78" fill="#d4d4d4"/><rect x="7.49" y="3.27" width="8.03" height="0.78" fill="#4ec9b0"/><rect x="15.52" y="3.27" width="0.54" height="0.78" fill="#d4d4d4"/><rect x="16.05" y="3.27" width="4.82" height="0.78" fill="#4ec9b0"/><rect x="21.4" y="3.27" width="3.21" height="0.78" fill="#c586c0"/><rect x="25.15" y="3.27" width="11.24" height="0.78" fill="#4ec9b0"/><rect x="0" y="4.36" width="2.14" height="0.78" fill="#c586c0"/><rect x="2.68" y="4.36" width="4.28" height="0.78" fill="#4ec9b0"/><rect x="6.96" y="4.36" width="0.54" height="0.78" fill="#d4d4d4"/><rect x="7.49" y="4.36" width="5.35" height="0.78" fill="#4ec9b0"/><rect x="12.84" y="4.36" width="0.54" height="0.78" fill="#d4d4d4"/><rect x="13.38" y="4.36" width="5.35" height="0.78" fill="#4ec9b0"/><rect x="18.73" y="4.36" width="0.54" height="0.78" fill="#d4d4d4"/><rect x="19.26" y="4.36" width="4.82" height="0.78" fill="#4ec9b0"/><rect x="24.61" y="4.36" width="3.21" height="0.78" fill="#c586c0"/><rect x="28.36" y="4.36" width="11.24" height="0.78" fill="#4ec9b0"/><rect x="0" y="5.45" width="2.14" height="0.78" fill="#c586c0"/><rect x="2.68" y="5.45" width="4.28" height="0.78" fill="#4ec9b0"/><rect x="6.96" y="5.45" width="0.54" height="0.78" fill="#d4d4d4"/><rect x="7.49" y="5.45" width="5.35" height="0.78" fill="#4ec9b0"/><rect x="12.84" y="5.45" width="0.54" height="0.78" fill="#d4d4d4"/><rect x="13.38" y="5.45" width="5.35" height="0.78" fill="#4ec9b0"/><rect x="19.26" y="5.45" width="3.21" height="0.78" fill="#c586c0"/><rect x="23.01" y="5.45" width="8.03" height="0.78" fill="#4ec9b0"/><rect x="0" y="6.54" width="2.14" height="0.78" fill="#c586c0"/><rect x="2.68" y="6.54" width="4.28" height="0.78" fill="#4ec9b0"/><rect x="6.96" y="6.54" width="0.54" height="0.78" fill="#d4d4d4"/><rect x="7.49" y="6.54" width="5.35" height="0.78" fill="#4ec9b0"/><rect x="12.84" y="6.54" width="0.54" height="0.78" fill="#d4d4d4"/><rect x="13.38" y="6.54" width="4.28" height="0.78" fill="#4ec9b0"/><rect x="17.66" y="6.54" width="0.54" height="0.78" fill="#d4d4d4"/><rect x="18.19" y="6.54" width="7.49" height="0.78" fill="#4ec9b0"/><rect x="26.21" y="6.54" width="3.21" height="0.78" fill="#c586c0"/><rect x="29.96" y="6.54" width="6.96" height="0.78" fill="#38786c"/><rect x="0" y="7.63" width="2.14" height="0.78" fill="#c586c0"/><rect x="2.68" y="7.63" width="4.28" height="0.78" fill="#4ec9b0"/><rect x="6.96" y="7.63" width="0.54" height="0.78" fill="#d4d4d4"/><rect x="7.49" y="7.63" width="5.35" height="0.78" fill="#4ec9b0"/><rect x="12.84" y="7.63" width="0.54" height="0.78" fill="#d4d4d4"/><rect x="13.38" y="7.63" width="4.28" height="0.78" fill="#4ec9b0"/><rect x="17.66" y="7.63" width="0.54" height="0.78" fill="#d4d4d4"/><rect x="18.19" y="7.63" width="7.49" height="0.78" fill="#4ec9b0"/><rect x="26.21" y="7.63" width="3.21" height="0.78" fill="#c586c0"/><rect x="29.96" y="7.63" width="6.96" height="0.78" fill="#4ec9b0"/><rect x="0" y="9.81" width="0.54" height="0.78" fill="#6a9955"/><rect x="1.07" y="9.81" width="2.68" height="0.78" fill="#6a9955"/><rect x="4.28" y="9.81" width="4.82" height="0.78" fill="#6a9955"/><rect x="9.63" y="9.81" width="1.07" height="0.78" fill="#6a9955"/><rect x="11.24" y="9.81" width="11.24" height="0.78" fill="#6a9955"/><rect x="0" y="10.9" width="7.49" height="0.78" fill="#9cdcfe"/><rect x="8.03" y="10.9" width="0.54" height="0.78" fill="#d4d4d4"/><rect x="9.1" y="10.9" width="11.24" height="0.78" fill="#4ec9b0"/><rect x="20.33" y="10.9" width="1.07" height="0.78" fill="#ffd700"/><rect x="0" y="11.99" width="7.49" height="0.78" fill="#9cdcfe"/><rect x="7.49" y="11.99" width="0.54" height="0.78" fill="#d4d4d4"/><rect x="8.03" y="11.99" width="8.03" height="0.78" fill="#dcdcaa"/><rect x="16.05" y="11.99" width="0.54" height="0.78" fill="#ffd700"/><rect x="16.59" y="11.99" width="0.54" height="0.78" fill="#da70d6"/><rect x="2.14" y="13.08" width="4.28" height="0.78" fill="#4ec9b0"/><rect x="6.42" y="13.08" width="0.54" height="0.78" fill="#179fff"/><rect x="6.96" y="13.08" width="3.75" height="0.78" fill="#9cdcfe"/><rect x="10.7" y="13.08" width="0.54" height="0.78" fill="#d4d4d4"/><rect x="11.24" y="13.08" width="1.6" height="0.78" fill="#ce9178"/><rect x="13.38" y="13.08" width="2.14" height="0.78" fill="#ce9178"/><rect x="16.05" y="13.08" width="1.07" height="0.78" fill="#ce9178"/><rect x="17.66" y="13.08" width="2.14" height="0.78" fill="#ce9178"/><rect x="20.33" y="13.08" width="1.6" height="0.78" fill="#ce9178"/><rect x="22.47" y="13.08" width="0.54" height="0.78" fill="#ce9178"/><rect x="23.54" y="13.08" width="2.14" height="0.78" fill="#ce9178"/><rect x="26.21" y="13.08" width="1.07" height="0.78" fill="#ce9178"/><rect x="27.82" y="13.08" width="3.75" height="0.78" fill="#ce9178"/><rect x="31.57" y="13.08" width="0.54" height="0.78" fill="#179fff"/><rect x="32.1" y="13.08" width="0.54" height="0.78" fill="#d4d4d4"/><rect x="2.14" y="14.17" width="4.28" height="0.78" fill="#4ec9b0"/><rect x="6.42" y="14.17" width="0.54" height="0.78" fill="#179fff"/><rect x="6.96" y="14.17" width="3.75" height="0.78" fill="#9cdcfe"/><rect x="10.7" y="14.17" width="0.54" height="0.78" fill="#d4d4d4"/><rect x="11.24" y="14.17" width="1.6" height="0.78" fill="#ce9178"/><rect x="13.38" y="14.17" width="2.14" height="0.78" fill="#ce9178"/><rect x="16.05" y="14.17" width="1.07" height="0.78" fill="#ce9178"/><rect x="17.66" y="14.17" width="2.14" height="0.78" fill="#ce9178"/><rect x="20.33" y="14.17" width="1.6" height="0.78" fill="#ce9178"/><rect x="22.47" y="14.17" width="0.54" height="0.78" fill="#ce9178"/><rect x="23.54" y="14.17" width="2.14" height="0.78" fill="#ce9178"/><rect x="26.21" y="14.17" width="1.07" height="0.78" fill="#ce9178"/><rect x="27.82" y="14.17" width="4.28" height="0.78" fill="#ce9178"/><rect x="32.1" y="14.17" width="0.54" height="0.78" fill="#179fff"/><rect x="32.64" y="14.17" width="0.54" height="0.78" fill="#d4d4d4"/><rect x="2.14" y="15.26" width="4.28" height="0.78" fill="#4ec9b0"/><rect x="6.42" y="15.26" width="0.54" height="0.78" fill="#179fff"/><rect x="6.96" y="15.26" width="3.75" height="0.78" fill="#9cdcfe"/><rect x="10.7" y="15.26" width="0.54" height="0.78" fill="#d4d4d4"/><rect x="11.24" y="15.26" width="1.6" height="0.78" fill="#ce9178"/><rect x="13.38" y="15.26" width="2.14" height="0.78" fill="#ce9178"/><rect x="16.05" y="15.26" width="1.07" height="0.78" fill="#ce9178"/><rect x="17.66" y="15.26" width="3.75" height="0.78" fill="#ce9178"/><rect x="21.94" y="15.26" width="1.6" height="0.78" fill="#ce9178"/><rect x="24.08" y="15.26" width="0.54" height="0.78" fill="#ce9178"/><rect x="25.15" y="15.26" width="2.14" height="0.78" fill="#ce9178"/><rect x="27.82" y="15.26" width="1.07" height="0.78" fill="#ce9178"/><rect x="29.43" y="15.26" width="3.21" height="0.78" fill="#ce9178"/><rect x="32.64" y="15.26" width="0.54" height="0.78" fill="#179fff"/><rect x="0" y="16.35" width="0.54" height="0.78" fill="#da70d6"/><rect x="0.54" y="16.35" width="0.54" height="0.78" fill="#ffd700"/><rect x="0" y="18.53" width="0.54" height="0.78" fill="#6a9955"/><rect x="1.07" y="18.53" width="2.68" height="0.78" fill="#6a9955"/><rect x="4.28" y="18.53" width="0.54" height="0.78" fill="#6a9955"/><rect x="5.35" y="18.53" width="1.6" height="0.78" fill="#6a9955"/><rect x="7.49" y="18.53" width="4.28" height="0.78" fill="#6a9955"/><rect x="0" y="19.62" width="8.03" height="0.78" fill="#9cdcfe"/><rect x="8.56" y="19.62" width="0.54" height="0.78" fill="#d4d4d4"/><rect x="9.63" y="19.62" width="1.6" height="0.78" fill="#ce9178"/><rect x="0" y="20.71" width="2.68" height="0.78" fill="#ce9178"/><rect x="3.21" y="20.71" width="2.68" height="0.78" fill="#ce9178"/><rect x="6.42" y="20.71" width="5.35" height="0.78" fill="#ce9178"/><rect x="12.31" y="20.71" width="3.21" height="0.78" fill="#ce9178"/><rect x="16.05" y="20.71" width="1.6" height="0.78" fill="#ce9178"/><rect x="18.19" y="20.71" width="4.82" height="0.78" fill="#ce9178"/><rect x="0" y="21.8" width="5.35" height="0.78" fill="#ce9178"/><rect x="0" y="22.89" width="1.07" height="0.78" fill="#ce9178"/><rect x="1.6" y="22.89" width="1.6" height="0.78" fill="#ce9178"/><rect x="3.75" y="22.89" width="1.6" height="0.78" fill="#ce9178"/><rect x="5.89" y="22.89" width="1.07" height="0.78" fill="#ce9178"/><rect x="7.49" y="22.89" width="4.82" height="0.78" fill="#ce9178"/><rect x="12.84" y="22.89" width="1.07" height="0.78" fill="#ce9178"/><rect x="2.14" y="23.98" width="1.07" height="0.78" fill="#ce9178"/><rect x="3.75" y="23.98" width="5.89" height="0.78" fill="#ce9178"/><rect x="10.17" y="23.98" width="1.07" height="0.78" fill="#ce9178"/><rect x="0" y="25.07" width="1.07" height="0.78" fill="#ce9178"/><rect x="1.6" y="25.07" width="3.21" height="0.78" fill="#ce9178"/><rect x="5.35" y="25.07" width="1.07" height="0.78" fill="#ce9178"/><rect x="0" y="26.16" width="4.82" height="0.78" fill="#ce9178"/><rect x="5.35" y="26.16" width="6.42" height="0.78" fill="#ce9178"/><rect x="0" y="27.25" width="3.75" height="0.78" fill="#ce9178"/><rect x="0" y="28.34" width="1.6" height="0.78" fill="#ce9178"/><rect x="0" y="30.52" width="4.82" height="0.78" fill="#9cdcfe"/><rect x="5.35" y="30.52" width="0.54" height="0.78" fill="#d4d4d4"/><rect x="6.42" y="30.52" width="11.24" height="0.78" fill="#4ec9b0"/><rect x="17.66" y="30.52" width="0.54" height="0.78" fill="#ffd700"/><rect x="18.19" y="30.52" width="7.49" height="0.78" fill="#9cdcfe"/><rect x="25.68" y="30.52" width="0.54" height="0.78" fill="#d4d4d4"/><rect x="26.21" y="30.52" width="7.49" height="0.78" fill="#9cdcfe"/><rect x="33.71" y="30.52" width="0.54" height="0.78" fill="#ffd700"/><rect x="0" y="31.61" width="7.49" height="0.78" fill="#9cdcfe"/><rect x="8.03" y="31.61" width="0.54" height="0.78" fill="#d4d4d4"/><rect x="9.1" y="31.61" width="6.96" height="0.78" fill="#4ec9b0"/><rect x="16.05" y="31.61" width="0.54" height="0.78" fill="#ffd700"/><rect x="16.59" y="31.61" width="4.28" height="0.78" fill="#9cdcfe"/><rect x="20.87" y="31.61" width="0.54" height="0.78" fill="#d4d4d4"/><rect x="21.4" y="31.61" width="8.03" height="0.78" fill="#9cdcfe"/><rect x="29.43" y="31.61" width="0.54" height="0.78" fill="#ffd700"/><rect x="0" y="32.7" width="1.6" height="0.78" fill="#9cdcfe"/><rect x="2.14" y="32.7" width="0.54" height="0.78" fill="#d4d4d4"/><rect x="3.21" y="32.7" width="8.03" height="0.78" fill="#4ec9b0"/><rect x="11.24" y="32.7" width="1.07" height="0.78" fill="#ffd700"/><rect x="0" y="34.88" width="6.42" height="0.78" fill="#9cdcfe"/><rect x="6.96" y="34.88" width="0.54" height="0.78" fill="#d4d4d4"/><rect x="8.03" y="34.88" width="4.28" height="0.78" fill="#4ec9b0"/><rect x="12.31" y="34.88" width="1.07" height="0.78" fill="#ffd700"/><rect x="0" y="35.97" width="6.42" height="0.78" fill="#9cdcfe"/><rect x="6.42" y="35.97" width="0.54" height="0.78" fill="#d4d4d4"/><rect x="6.96" y="35.97" width="6.96" height="0.78" fill="#dcdcaa"/><rect x="13.91" y="35.97" width="0.54" height="0.78" fill="#ffd700"/><rect x="14.45" y="35.97" width="5.89" height="0.78" fill="#ce9178"/><rect x="20.33" y="35.97" width="0.54" height="0.78" fill="#d4d4d4"/><rect x="21.4" y="35.97" width="4.82" height="0.78" fill="#9cdcfe"/><rect x="26.21" y="35.97" width="0.54" height="0.78" fill="#ffd700"/><rect x="0" y="37.06" width="6.42" height="0.78" fill="#9cdcfe"/><rect x="6.42" y="37.06" width="0.54" height="0.78" fill="#d4d4d4"/><rect x="6.96" y="37.06" width="6.96" height="0.78" fill="#dcdcaa"/><rect x="13.91" y="37.06" width="0.54" height="0.78" fill="#ffd700"/><rect x="14.45" y="37.06" width="8.56" height="0.78" fill="#ce9178"/><rect x="23.01" y="37.06" width="0.54" height="0.78" fill="#d4d4d4"/><rect x="24.08" y="37.06" width="7.49" height="0.78" fill="#9cdcfe"/><rect x="31.57" y="37.06" width="0.54" height="0.78" fill="#ffd700"/><rect x="0" y="38.15" width="6.42" height="0.78" fill="#9cdcfe"/><rect x="6.42" y="38.15" width="0.54" height="0.78" fill="#d4d4d4"/><rect x="6.96" y="38.15" width="6.96" height="0.78" fill="#dcdcaa"/><rect x="13.91" y="38.15" width="0.54" height="0.78" fill="#ffd700"/><rect x="14.45" y="38.15" width="2.68" height="0.78" fill="#ce9178"/><rect x="17.12" y="38.15" width="0.54" height="0.78" fill="#d4d4d4"/><rect x="18.19" y="38.15" width="1.6" height="0.78" fill="#9cdcfe"/><rect x="19.8" y="38.15" width="0.54" height="0.78" fill="#ffd700"/><rect x="0" y="39.24" width="6.42" height="0.78" fill="#9cdcfe"/><rect x="6.42" y="39.24" width="0.54" height="0.78" fill="#d4d4d4"/><rect x="6.96" y="39.24" width="3.75" height="0.78" fill="#dcdcaa"/><rect x="10.7" y="39.24" width="0.54" height="0.78" fill="#ffd700"/><rect x="11.24" y="39.24" width="5.89" height="0.78" fill="#ce9178"/><rect x="17.12" y="39.24" width="0.54" height="0.78" fill="#d4d4d4"/><rect x="18.19" y="39.24" width="13.91" height="0.78" fill="#ce9178"/><rect x="32.1" y="39.24" width="0.54" height="0.78" fill="#ffd700"/><rect x="0" y="40.33" width="6.42" height="0.78" fill="#9cdcfe"/><rect x="6.42" y="40.33" width="0.54" height="0.78" fill="#d4d4d4"/><rect x="6.96" y="40.33" width="3.75" height="0.78" fill="#dcdcaa"/><rect x="10.7" y="40.33" width="0.54" height="0.78" fill="#ffd700"/><rect x="11.24" y="40.33" width="8.56" height="0.78" fill="#ce9178"/><rect x="19.8" y="40.33" width="0.54" height="0.78" fill="#d4d4d4"/><rect x="20.87" y="40.33" width="2.68" height="0.78" fill="#ce9178"/><rect x="23.54" y="40.33" width="0.54" height="0.78" fill="#ffd700"/><rect x="0" y="42.51" width="0.54" height="0.78" fill="#6a9955"/><rect x="1.07" y="42.51" width="1.6" height="0.78" fill="#6a9955"/><rect x="3.21" y="42.51" width="0.54" height="0.78" fill="#6a9955"/><rect x="4.28" y="42.51" width="4.28" height="0.78" fill="#6a9955"/><rect x="0" y="43.6" width="4.28" height="0.78" fill="#9cdcfe"/><rect x="4.82" y="43.6" width="0.54" height="0.78" fill="#d4d4d4"/><rect x="5.89" y="43.6" width="2.14" height="0.78" fill="#ce9178"/><rect x="8.56" y="43.6" width="2.68" height="0.78" fill="#ce9178"/><rect x="11.77" y="43.6" width="1.07" height="0.78" fill="#ce9178"/><rect x="13.38" y="43.6" width="3.75" height="0.78" fill="#ce9178"/><rect x="0" y="44.69" width="3.75" height="0.78" fill="#9cdcfe"/><rect x="4.28" y="44.69" width="0.54" height="0.78" fill="#d4d4d4"/><rect x="5.35" y="44.69" width="6.42" height="0.78" fill="#9cdcfe"/><rect x="11.77" y="44.69" width="0.54" height="0.78" fill="#d4d4d4"/><rect x="12.31" y="44.69" width="1.6" height="0.78" fill="#dcdcaa"/><rect x="13.91" y="44.69" width="0.54" height="0.78" fill="#ffd700"/><rect x="2.14" y="45.78" width="0.54" height="0.78" fill="#da70d6"/><rect x="4.28" y="46.87" width="5.89" height="0.78" fill="#ce9178"/><rect x="10.17" y="46.87" width="0.54" height="0.78" fill="#d4d4d4"/><rect x="11.24" y="46.87" width="0.54" height="0.78" fill="#179fff"/><rect x="11.77" y="46.87" width="3.75" height="0.78" fill="#ce9178"/><rect x="15.52" y="46.87" width="0.54" height="0.78" fill="#d4d4d4"/><rect x="16.59" y="46.87" width="4.28" height="0.78" fill="#9cdcfe"/><rect x="20.87" y="46.87" width="0.54" height="0.78" fill="#179fff"/><rect x="21.4" y="46.87" width="0.54" height="0.78" fill="#d4d4d4"/><rect x="4.28" y="47.96" width="8.56" height="0.78" fill="#ce9178"/><rect x="12.84" y="47.96" width="0.54" height="0.78" fill="#d4d4d4"/><rect x="13.91" y="47.96" width="0.54" height="0.78" fill="#179fff"/><rect x="14.45" y="47.96" width="5.35" height="0.78" fill="#ce9178"/><rect x="19.8" y="47.96" width="0.54" height="0.78" fill="#d4d4d4"/><rect x="20.87" y="47.96" width="4.28" height="0.78" fill="#9cdcfe"/><rect x="25.15" y="47.96" width="0.54" height="0.78" fill="#179fff"/><rect x="25.68" y="47.96" width="0.54" height="0.78" fill="#d4d4d4"/><rect x="2.14" y="49.05" width="0.54" height="0.78" fill="#da70d6"/><rect x="2.68" y="49.05" width="0.54" height="0.78" fill="#d4d4d4"/><rect x="0" y="50.14" width="0.54" height="0.78" fill="#ffd700"/><rect x="0" y="52.32" width="2.68" height="0.78" fill="#dcdcaa"/><rect x="2.68" y="52.32" width="0.54" height="0.78" fill="#ffd700"/><rect x="3.21" y="52.32" width="3.75" height="0.78" fill="#9cdcfe"/><rect x="6.96" y="52.32" width="0.54" height="0.78" fill="#da70d6"/><rect x="7.49" y="52.32" width="2.68" height="0.78" fill="#ce9178"/><rect x="10.17" y="52.32" width="0.54" height="0.78" fill="#da70d6"/><rect x="10.7" y="52.32" width="0.54" height="0.78" fill="#da70d6"/><rect x="11.24" y="52.32" width="4.82" height="0.78" fill="#ce9178"/><rect x="16.05" y="52.32" width="0.54" height="0.78" fill="#da70d6"/><rect x="16.59" y="52.32" width="0.54" height="0.78" fill="#ffd700"/></svg>
<div style="left:1194.6px;top:62.5px;width:7.4px;height:294.5px;background:#494949;"></div>
<div style="left:1197.5px;top:315.3px;width:3px;height:1.4px;background:#b0b0b0;"></div>
<div style="left:677px;top:610.5px;width:525px;height:150px;background:#181818;"></div>
<div style="left:677px;top:610.2px;width:525px;height:0.6px;background:#282828;"></div>
<span class="t" style="top:615.88px;height:10.24px;line-height:10.24px;font-size:6.4px;color:#a0a0a0;left:687.5px;transform:scaleX(0.9095);transform-origin:0 50%;">PROBLEMS</span>
<span class="t" style="top:615.88px;height:10.24px;line-height:10.24px;font-size:6.4px;color:#a0a0a0;left:732.7px;transform:scaleX(0.9551);transform-origin:0 50%;">OUTPUT</span>
<span class="t" style="top:615.88px;height:10.24px;line-height:10.24px;font-size:6.4px;color:#a0a0a0;left:770.7px;transform:scaleX(0.9343);transform-origin:0 50%;">DEBUG CONSOLE</span>
<span class="t" style="top:615.88px;height:10.24px;line-height:10.24px;font-size:6.4px;color:#e7e7e7;left:835.7px;transform:scaleX(0.9191);transform-origin:0 50%;">TERMINAL</span>
<div style="left:835.7px;top:625.5px;width:29.7px;height:0.7px;background:#0c64ad;"></div>
<span class="t" style="top:615.88px;height:10.24px;line-height:10.24px;font-size:6.4px;color:#a0a0a0;left:878.9px;transform:scaleX(0.9358);transform-origin:0 50%;">PORTS</span>
<span class="t" style="top:615.88px;height:10.24px;line-height:10.24px;font-size:6.4px;color:#a0a0a0;left:911.8px;transform:scaleX(0.9021);transform-origin:0 50%;">CODE REFERENCE LOG</span>
<span class="t" style="top:615.88px;height:10.24px;line-height:10.24px;font-size:6.4px;color:#a0a0a0;left:992.2px;transform:scaleX(0.9275);transform-origin:0 50%;">AZURE</span>
<span class="t" style="top:615.88px;height:10.24px;line-height:10.24px;font-size:6.4px;color:#a0a0a0;left:1025px;transform:scaleX(0.9549);transform-origin:0 50%;">COMMENTS</span>
<svg style="left:1070.98px;top:619.28px;" width="7.04" height="2.24" viewBox="0 0 7.04 2.24"><circle cx="1.12" cy="1.12" r="0.62" fill="#c5c5c5"/><circle cx="3.52" cy="1.12" r="0.62" fill="#c5c5c5"/><circle cx="5.92" cy="1.12" r="0.62" fill="#c5c5c5"/></svg>
<svg style="left:1135.9px;top:615.6px;" width="8.6" height="8.6" viewBox="0 0 16 16"><path d="M8 1.500v13M1.500 8h13" stroke="#c5c5c5" stroke-width="1.500"/></svg>
<svg style="left:1146.7px;top:617.8px;" width="5" height="5" viewBox="0 0 16 16"><path d="M3 5l5 5 5-5" fill="none" stroke="#8a8a8a" stroke-width="2"/></svg>
<svg style="left:1158.28px;top:619.18px;" width="7.04" height="2.24" viewBox="0 0 7.04 2.24"><circle cx="1.12" cy="1.12" r="0.62" fill="#8a8a8a"/><circle cx="3.52" cy="1.12" r="0.62" fill="#8a8a8a"/><circle cx="5.92" cy="1.12" r="0.62" fill="#8a8a8a"/></svg>
<svg style="left:1172px;top:616.3px;" width="8" height="8" viewBox="0 0 16 16"><path d="M3 10.500l5-5 5 5" fill="none" stroke="#8a8a8a" stroke-width="1.400"/></svg>
<svg style="left:1186.2px;top:616.3px;" width="7" height="7" viewBox="0 0 16 16"><path d="M2.500 2.500l11 11M13.500 2.500l-11 11" stroke="#c5c5c5" stroke-width="1.500"/></svg>
<span class="t tm" style="left:687.200px;top:633.19px">/usr/local/bin/python3 /Users/martinheller/Code/Haystack/Haystack_quickstart.py</span>
<span class="t tm" style="left:687.200px;top:640.19px">martinheller@Martins-M1-MBP Code % /usr/local/bin/python3 /Users/martinheller/Code/Haystack/Haystack_quickstart.</span>
<span class="t tm" style="left:687.200px;top:648.19px">py</span>
<span class="t tm" style="left:687.200px;top:655.19px">['Jean lives in Paris.']</span>
<span class="t tm" style="left:687.200px;top:663.19px">martinheller@Martins-M1-MBP Code % </span>
<div style="left:820.9px;top:662.4px;width:3.8px;height:7.4px;background:transparent;box-sizing:border-box;border:0.600px solid #303030;"></div>
<div style="left:1129.5px;top:629px;width:6px;height:131.5px;background:#1c1c1c;"></div>
<div style="left:1137px;top:629px;width:0.6px;height:131.5px;background:#282828;"></div>
<div style="left:1137.6px;top:652.7px;width:64.4px;height:12px;background:#37373d;"></div>
<svg style="left:1142.9px;top:630.5px;" width="9.2" height="9.2" viewBox="0 0 16 16"><circle cx="8" cy="8" r="3.200" fill="none" stroke="#c5c5c5" stroke-width="1.200"/><path d="M8 1.500v3M8 11.500v3M1.500 8h3M11.500 8h3M3.400 3.400l2.200 2.200M10.400 10.400l2.200 2.200M12.600 3.400l-2.200 2.200M5.600 10.400l-2.200 2.200" stroke="#c5c5c5" stroke-width="1.100"/></svg>
<span class="t" style="top:630.84px;height:11.33px;line-height:11.33px;font-size:7.08px;color:#cccccc;left:1153.9px;letter-spacing:-0.02px;">Python De…</span>
<svg style="left:1142.9px;top:642.5px;" width="9.2" height="9.2" viewBox="0 0 16 16"><rect x="1.500" y="2.500" width="13" height="11" fill="none" stroke="#c5c5c5" stroke-width="1.200"/><path d="M4 6l2 2-2 2M7.500 10.500h3" fill="none" stroke="#c5c5c5" stroke-width="1.100"/></svg>
<span class="t" style="top:642.84px;height:11.33px;line-height:11.33px;font-size:7.08px;color:#cccccc;left:1153.9px;letter-spacing:-0.26px;">zsh</span>
<svg style="left:1142.9px;top:654.5px;" width="9.2" height="9.2" viewBox="0 0 16 16"><rect x="1.500" y="2.500" width="13" height="11" fill="none" stroke="#c5c5c5" stroke-width="1.200"/><path d="M4 6l2 2-2 2M7.500 10.500h3" fill="none" stroke="#c5c5c5" stroke-width="1.100"/></svg>
<span class="t" style="top:654.84px;height:11.33px;line-height:11.33px;font-size:7.08px;color:#cccccc;left:1153.9px;letter-spacing:0.07px;">Python</span>
<div style="left:178px;top:760.5px;width:1024px;height:12.5px;background:#181818;"></div>
<div style="left:178px;top:760.2px;width:1024px;height:0.6px;background:#282828;"></div>
<div style="left:178px;top:760.5px;width:19.2px;height:12px;background:#0078d4;"></div>
<svg style="left:183.5px;top:762.3px;" width="8" height="8" viewBox="0 0 16 16"><path d="M9.500 2.500l3 3-3 3M6.500 7.500l-3 3 3 3" fill="none" stroke="#fff" stroke-width="1.500"/></svg>
<svg style="left:201.2px;top:763.3px;" width="7" height="7" viewBox="0 0 16 16"><circle cx="8" cy="8" r="6" fill="none" stroke="#d4d4d4" stroke-width="1.200"/><path d="M5.500 5.500l5 5M10.500 5.500l-5 5" stroke="#d4d4d4" stroke-width="1.200"/></svg>
<span class="t" style="top:761.77px;height:10.45px;line-height:10.45px;font-size:6.53px;color:#d4d4d4;left:210.3px;letter-spacing:0.07px;">0</span>
<svg style="left:216.3px;top:763.2px;" width="7.2" height="7.2" viewBox="0 0 16 16"><path d="M8 2.500l6.500 11h-13z" fill="none" stroke="#d4d4d4" stroke-width="1.200" stroke-linejoin="round"/><path d="M8 6.500v3.500M8 11.300v1" stroke="#d4d4d4" stroke-width="1.100"/></svg>
<span class="t" style="top:761.77px;height:10.45px;line-height:10.45px;font-size:6.53px;color:#d4d4d4;left:226.2px;letter-spacing:0.07px;">0</span>
<svg style="left:238.4px;top:763.2px;" width="7.2" height="7.2" viewBox="0 0 16 16"><circle cx="8" cy="6" r="1.600" fill="#d4d4d4"/><path d="M8 7.500l-2.500 6.500M8 7.500l2.500 6.500M4.500 9.500a4.500 4.500 0 010-7M11.500 9.500a4.500 4.500 0 000-7" fill="none" stroke="#d4d4d4" stroke-width="1.100"/></svg>
<span class="t" style="top:761.77px;height:10.45px;line-height:10.45px;font-size:6.53px;color:#d4d4d4;left:248.2px;letter-spacing:0.07px;">0</span>
<span class="t" style="top:761.77px;height:10.45px;line-height:10.45px;font-size:6.53px;color:#d4d4d4;left:261.2px;letter-spacing:-0.3px;">AWS</span>
<svg style="left:284.6px;top:763.4px;" width="6.8" height="6.8" viewBox="0 0 16 16"><path d="M4 2.500l9 5.500-9 5.500z" fill="none" stroke="#d4d4d4" stroke-width="1.300" stroke-linejoin="round"/></svg>
<span class="t" style="top:761.77px;height:10.45px;line-height:10.45px;font-size:6.53px;color:#d4d4d4;left:293.9px;letter-spacing:0.1px;">Amazon Q</span>
<span class="t" style="top:761.77px;height:10.45px;line-height:10.45px;font-size:6.53px;color:#d4d4d4;left:750.3px;letter-spacing:0.2px;">AzureOpenAI: Completion</span>
<span class="t" style="top:761.77px;height:10.45px;line-height:10.45px;font-size:6.53px;color:#d4d4d4;left:838.5px;letter-spacing:0.25px;">Ln 49, Col 1</span>
<span class="t" style="top:761.77px;height:10.45px;line-height:10.45px;font-size:6.53px;color:#d4d4d4;left:885.1px;letter-spacing:0.19px;">Spaces: 4</span>
<span class="t" style="top:761.77px;height:10.45px;line-height:10.45px;font-size:6.53px;color:#d4d4d4;left:924.7px;letter-spacing:0.28px;">UTF-8</span>
<span class="t" style="top:761.77px;height:10.45px;line-height:10.45px;font-size:6.53px;color:#d4d4d4;left:952.7px;letter-spacing:-0.31px;">LF</span>
<span class="t" style="top:761.24px;height:11.52px;line-height:11.52px;font-size:7.2px;color:#e0e0e0;left:967.9px;letter-spacing:0.3px;">{}</span>
<span class="t" style="top:761.77px;height:10.45px;line-height:10.45px;font-size:6.53px;color:#d4d4d4;left:978.6px;letter-spacing:0.28px;">Python</span>
<span class="t" style="top:761.77px;height:10.45px;line-height:10.45px;font-size:6.53px;color:#d4d4d4;left:1008.4px;letter-spacing:0.42px;">3.12.3 64-bit</span>
<svg style="left:1058.6px;top:763.2px;" width="7.2" height="7.2" viewBox="0 0 16 16"><rect x="2" y="3" width="12" height="10.500" fill="none" stroke="#d4d4d4" stroke-width="1.700"/><path d="M5 3V1.200h6V3M4.500 8.500h7M4.500 11h5" stroke="#d4d4d4" stroke-width="1.500" fill="none"/></svg>
<span class="t" style="top:761.77px;height:10.45px;line-height:10.45px;font-size:6.53px;color:#d4d4d4;left:1074.9px;letter-spacing:0.23px;">o tabnine enterprise</span>
<svg style="left:1145.6px;top:763.3px;" width="7" height="7" viewBox="0 0 16 16"><circle cx="8" cy="8" r="6.200" fill="none" stroke="#d4d4d4" stroke-width="1.500"/><path d="M5 8.500l2.200 2.200L11.500 5.500" stroke="#d4d4d4" stroke-width="1.400" fill="none"/></svg>
<span class="t" style="top:761.77px;height:10.45px;line-height:10.45px;font-size:6.53px;color:#d4d4d4;left:1155.4px;letter-spacing:0.26px;">Prettier</span>
<svg style="left:1187.6px;top:763.2px;" width="7.2" height="7.2" viewBox="0 0 16 16"><path d="M3 12h10l-1.300-2V7a3.700 3.700 0 00-7.400 0v3zM6.800 13.500a1.300 1.300 0 002.400 0" fill="none" stroke="#d4d4d4" stroke-width="1.500" stroke-linejoin="round"/></svg>
</div></div>
</body></html>
